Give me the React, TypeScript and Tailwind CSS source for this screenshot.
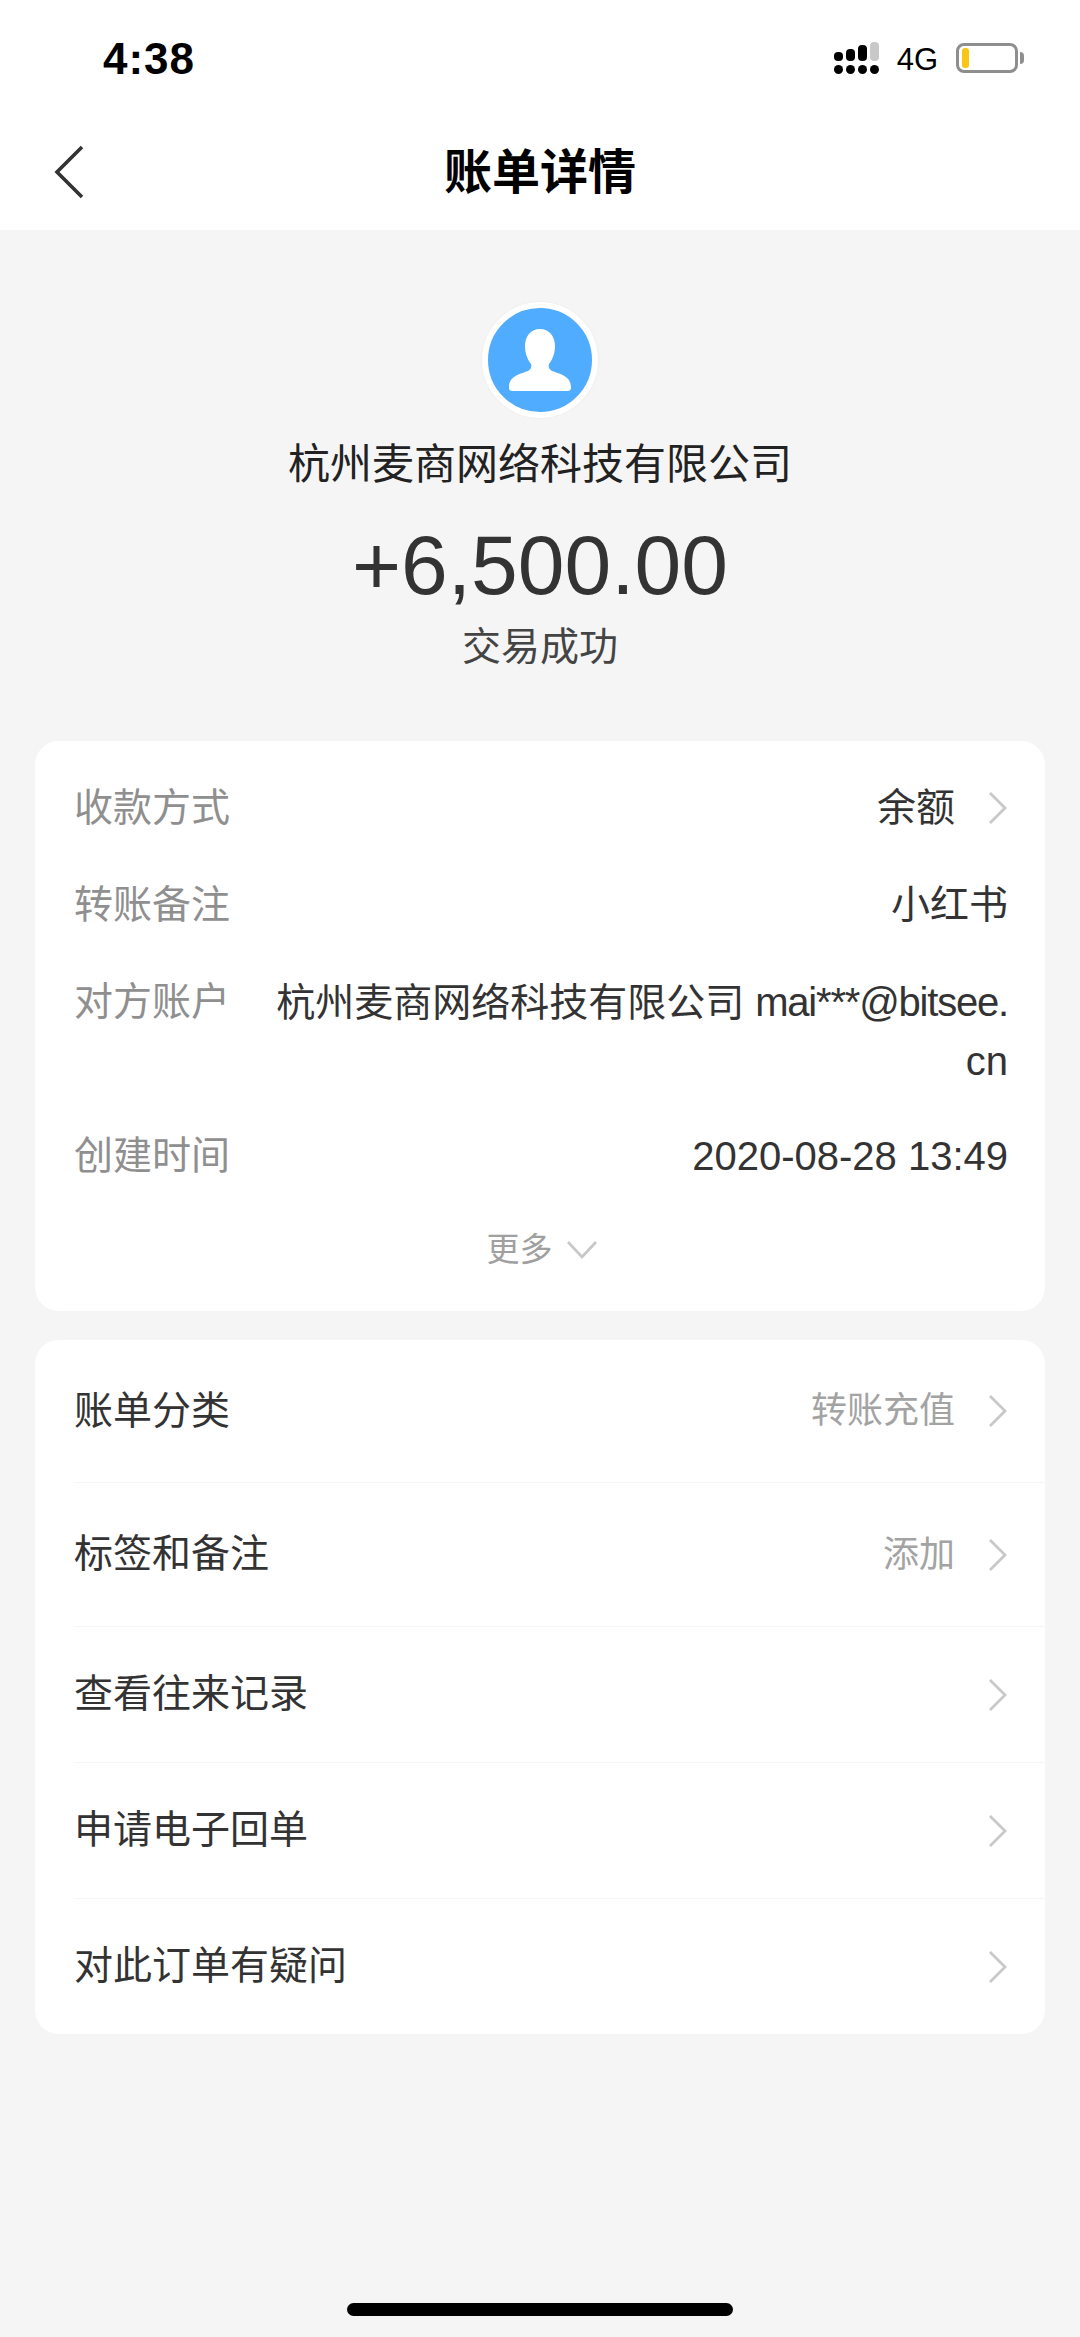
import React from 'react';

const cjk = "font-['Liberation_Sans','Noto_Sans_CJK_SC',sans-serif]";

function Chevron({ className }: { className?: string }) {
  return (
    <svg className={className} width="20" height="34" viewBox="0 0 20 34" fill="none">
      <path d="M2 2l15 15L2 32" stroke="#c8c8c8" strokeWidth="2.8" />
    </svg>
  );
}

function StatusBar() {
  const bars = [
    { h: 'h-[9px]', c: 'bg-black' },
    { h: 'h-[12px]', c: 'bg-black' },
    { h: 'h-[16px]', c: 'bg-black' },
    { h: 'h-[19px]', c: 'bg-[#c8c8c8]' },
  ];
  return (
    <div className="h-[116px] flex items-start justify-between pt-[37px] pl-[103px] pr-[56px]">
      <span className="text-[44px] leading-[44px] font-bold text-black tracking-[1px]">4:38</span>
      <div className="flex items-center mt-[3px]">
        <div className="flex flex-col gap-[4px] mr-[18px]">
          <div className="flex items-end gap-[3px]">
            {bars.map((b, i) => (
              <div key={i} className={`w-[9px] rounded-[4px] ${b.h} ${b.c}`} />
            ))}
          </div>
          <div className="flex gap-[3px]">
            {[0, 1, 2, 3].map((i) => (
              <div key={i} className="w-[9px] h-[9px] rounded-full bg-black" />
            ))}
          </div>
        </div>
        <span className="text-[31px] leading-[32px] text-black mr-[18px] mt-[4px]">4G</span>
        <div className="w-[62px] h-[30px] rounded-[8px] border-[3px] border-[#8e8e8e] px-[3px] py-[2px]">
          <div className="w-[7px] h-full rounded-[3px] bg-[#fbc515]" />
        </div>
        <div className="w-[4px] h-[12px] rounded-r-full bg-[#8e8e8e] ml-[2px]" />
      </div>
    </div>
  );
}

function DetailRow({ label, children, className }: { label: string; children: React.ReactNode; className?: string }) {
  return (
    <div className={`flex justify-between ${className ?? ''}`}>
      <span className="text-[39px] leading-[58px] text-[#8f8f8f] shrink-0">{label}</span>
      {children}
    </div>
  );
}

function LinkRow({ label, value, className }: { label: string; value?: string; className?: string }) {
  return (
    <div className={`flex items-center justify-between pr-[37px] border-b border-[#f5f5f5] last:border-b-0 ${className ?? ''}`}>
      <span className="text-[39px] text-[#333333]">{label}</span>
      <div className="flex items-center">
        {value && <span className="text-[36px] text-[#a3a3a3] mr-[33px]">{value}</span>}
        <Chevron />
      </div>
    </div>
  );
}

export default function App() {
  return (
    <div className={`w-[1080px] h-[2337px] bg-[#f5f5f5] flex flex-col overflow-hidden ${cjk}`}>
      <div className="bg-white h-[230px]">
        <StatusBar />
        <div className="relative h-[114px] flex items-center justify-center">
          <svg className="absolute left-[53px] top-[29px]" width="32" height="54" viewBox="0 0 32 54" fill="none">
            <path d="M29 2L4 27l25 25" stroke="#333333" strokeWidth="3.6" />
          </svg>
          <span className="text-[48px] font-bold text-black">账单详情</span>
        </div>
      </div>

      <div className="flex flex-col items-center pt-[72px] h-[511px]">
        <div className="w-[104px] h-[104px] rounded-full bg-[#4facfe] border-[6px] border-white box-content flex items-center justify-center shadow-[0_0_2px_#e8e4e0]">
          <svg width="62" height="62" viewBox="0 0 62 62">
            <path
              fill="#ffffff"
              d="M31 0c9 0 15 7 15 17 0 8-3 14-6 18-1 3 0 5 3 7 8 3 19 5 19 16 0 3-1 4-4 4H4c-3 0-4-1-4-4 0-11 11-13 19-16 3-2 4-4 3-7-3-4-6-10-6-18C16 7 22 0 31 0z"
            />
          </svg>
        </div>
        <span className="text-[42px] leading-[56px] text-[#222222] mt-[19px]">杭州麦商网络科技有限公司</span>
        <span className="text-[84px] leading-[92px] text-[#333333] mt-[26px]">+6,500.00</span>
        <span className="text-[39px] leading-[52px] text-[#444444] mt-[10px]">交易成功</span>
      </div>

      <div className="mx-[35px] h-[570px] bg-white rounded-[24px] pl-[39px] pr-[37px] pt-[38px] flex flex-col">
        <DetailRow label="收款方式">
          <div className="flex items-center">
            <span className="text-[39px] leading-[58px] text-[#333333] mr-[33px]">余额</span>
            <Chevron />
          </div>
        </DetailRow>
        <DetailRow label="转账备注" className="mt-[39px]">
          <span className="text-[39px] leading-[58px] text-[#333333]">小红书</span>
        </DetailRow>
        <DetailRow label="对方账户" className="mt-[39px]">
          <span className="text-right text-[39px] leading-[58px] text-[#333333]">
            杭州麦商网络科技有限公司 <span className="text-[40px] tracking-[-1.2px]">mai***@bitsee.</span>
            <br />
            <span className="text-[40px]">cn</span>
          </span>
        </DetailRow>
        <DetailRow label="创建时间" className="mt-[36px]">
          <span className="text-[40px] leading-[58px] text-[#333333]">2020-08-28 13:49</span>
        </DetailRow>
        <div className="flex items-center justify-center mt-[40px] pl-[2px]">
          <span className="text-[33px] leading-[50px] text-[#a0a0a0] mr-[13px]">更多</span>
          <svg width="32" height="20" viewBox="0 0 32 20" fill="none">
            <path d="M2 2l14 15L30 2" stroke="#c8c8c8" strokeWidth="2.8" />
          </svg>
        </div>
      </div>

      <div className="mx-[35px] mt-[29px] h-[694px] bg-white rounded-[24px] pl-[39px] flex flex-col">
        <LinkRow label="账单分类" value="转账充值" className="h-[143px]" />
        <LinkRow label="标签和备注" value="添加" className="h-[144px]" />
        <LinkRow label="查看往来记录" className="h-[136px]" />
        <LinkRow label="申请电子回单" className="h-[136px]" />
        <LinkRow label="对此订单有疑问" className="h-[135px]" />
      </div>

      <div className="mt-auto mb-[21px] mx-auto w-[386px] h-[13px] rounded-full bg-black" />
    </div>
  );
}
